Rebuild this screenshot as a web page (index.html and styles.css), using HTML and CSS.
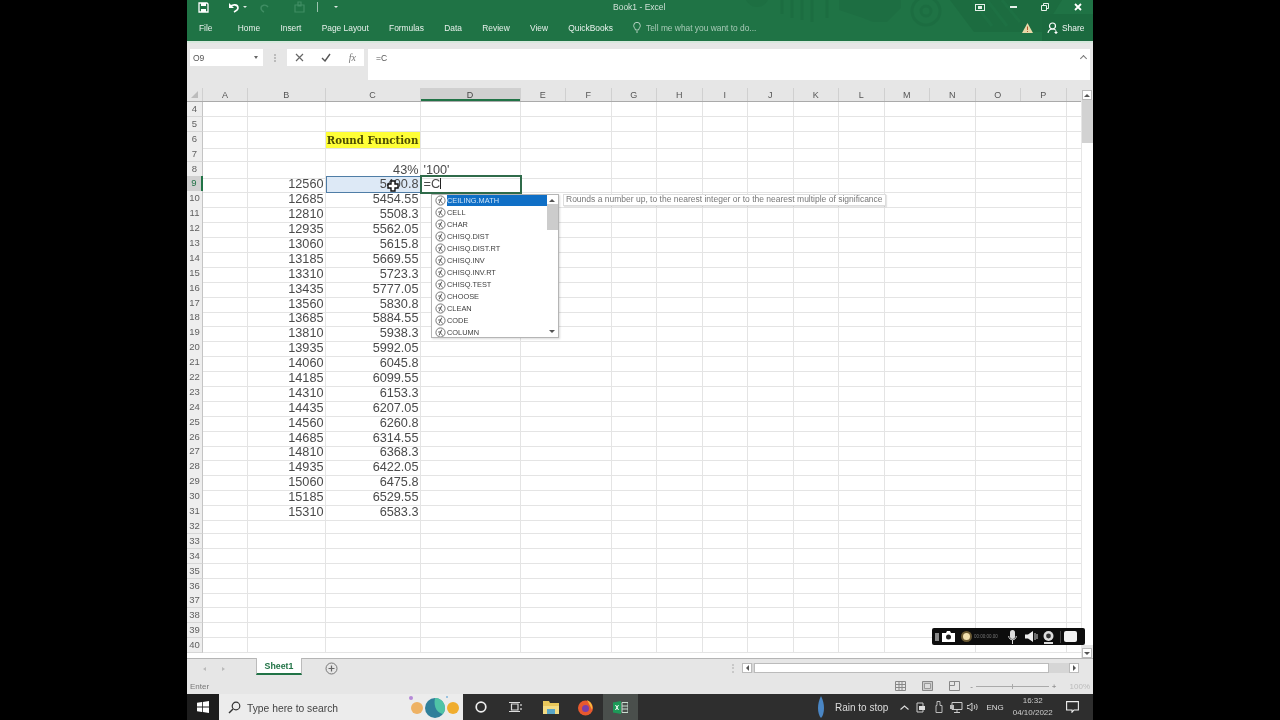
FILE: index.html
```html
<!DOCTYPE html>
<html lang="en">
<head>
  <meta charset="UTF-8" />
  <title>Book1 - Excel</title>
  <link rel="stylesheet" href="styles.css">
</head>
<body>
  <svg class="defs" width="0" height="0">
    <symbol id="fn" viewBox="0 0 11 11">
      <circle cx="5.5" cy="5.5" r="4.6" fill="#fff" stroke="#777" stroke-width="1"/>
      <path d="M6.8 2.6 4 8.4M3.2 5h3M5.4 6 7.8 8.4" fill="none" stroke="#555" stroke-width="1"/>
    </symbol>
  </svg>

  <div class="screen">
    <header class="ribbon">
      <svg class="pattern" width="906" height="41" viewBox="0 0 906 41">
        <g fill="#1b6a3f">
          <path d="M652 0h62v8l-14 14-14 0-10-4-24-8z" opacity=".5"/>
          <circle cx="570" cy="-5" r="12" opacity=".4"/>
          <path d="M763 0h112l-20 32h-68z" opacity=".8"/>
        </g>
        <g fill="none" stroke="#1b6a3f" stroke-width="3" opacity=".6">
          <circle cx="739" cy="11" r="14"/>
          <circle cx="739" cy="11" r="5"/>
          <path d="M595 0v14M605 0v18M615 0v20M625 0v22M640 0v18"/>
          <path d="M785 0l20 26M800 0l20 26M815 0l18 22" stroke="#1f7345"/>
        </g>
      </svg>

      <div class="titlebar">
        <div class="qat">
          <svg class="qat-save" width="11" height="11" viewBox="0 0 11 11"><path d="M1 1h8l1 1v8H1z" fill="none" stroke="#fff" stroke-width="1.3"/><path d="M3 1h5v3H3zM3 7h5v3H3z" fill="#fff"/></svg>
          <svg class="qat-undo" width="12" height="11" viewBox="0 0 12 11"><path d="M2 5c2-3 8-3 8 1 0 2-2 3-4 4" fill="none" stroke="#fff" stroke-width="1.6"/><path d="M1 1v5h5z" fill="#fff"/></svg>
          <span class="qat-caret"></span>
          <svg class="qat-redo" width="11" height="11" viewBox="0 0 11 11"><path d="M9 5C7 2 2 3 2 6c0 2 1 3 3 4" fill="none" stroke="#3f8d63" stroke-width="1.4"/></svg>
          <svg class="qat-touch" width="11" height="12" viewBox="0 0 11 12"><path d="M1 4h9v7H1zM4 1h3v4H4z" fill="none" stroke="#3f8d63" stroke-width="1.2"/></svg>
          <span class="qat-sep"></span>
          <span class="qat-caret qat-last"></span>
        </div>
        <div class="doc-title">Book1 - Excel</div>
        <div class="win-btns">
          <svg width="10" height="7" viewBox="0 0 10 7"><rect x=".5" y=".5" width="9" height="6" fill="none" stroke="#e6f0ea"/><rect x="3" y="2" width="4" height="3" fill="#e6f0ea"/></svg>
          <span class="win-min"></span>
          <svg width="8" height="8" viewBox="0 0 8 8"><path d="M2.5 2V.5h5v5H6M.5 2.5h5v5h-5z" fill="none" stroke="#e6f0ea"/></svg>
          <svg width="8" height="8" viewBox="0 0 8 8"><path d="M1 1l6 6M7 1 1 7" stroke="#fff" stroke-width="1.8"/></svg>
        </div>
      </div>

      <div class="tabs">
        <nav class="tab-list">
          <a class="tab-file">File</a>
          <a>Home</a>
          <a>Insert</a>
          <a>Page Layout</a>
          <a>Formulas</a>
          <a>Data</a>
          <a>Review</a>
          <a>View</a>
          <a>QuickBooks</a>
        </nav>
        <div class="tell-me">
          <svg width="8" height="11" viewBox="0 0 8 11"><path d="M2.5 8C2 6 .7 5.5.7 3.6a3.3 3.3 0 0 1 6.6 0C7.3 5.5 6 6 5.5 8zM3 10h2" fill="none" stroke="#b7d3c3"/></svg>
          <span>Tell me what you want to do...</span>
        </div>
        <svg class="warn" width="11" height="10" viewBox="0 0 11 10"><path d="M5.5 0 11 10H0z" fill="#e8d9a8"/><path d="M5 3.5h1V7H5zM5 8h1v1H5z" fill="#b5562c"/></svg>
        <div class="share">
          <svg width="12" height="12" viewBox="0 0 12 12"><circle cx="5.5" cy="4" r="3" fill="none" stroke="#fff" stroke-width="1.2"/><path d="M1 11c.5-3 2-4 4.5-4s3 .7 3.5 1.5M9 9v3M7.5 10.5h3" fill="none" stroke="#fff" stroke-width="1.2"/></svg>
          <span>Share</span>
        </div>
      </div>
    </header>

    <section class="formula-bar">
      <div class="name-box"><span>O9</span><i class="caret-down"></i></div>
      <span class="grip"></span>
      <div class="fx-btns">
        <svg width="9" height="9" viewBox="0 0 9 9"><path d="M1 1l7 7M8 1 1 8" stroke="#666" stroke-width="1.2"/></svg>
        <svg width="10" height="9" viewBox="0 0 10 9"><path d="M1 5l3 3 5-7" fill="none" stroke="#555" stroke-width="1.4"/></svg>
        <span class="fx-label">fx</span>
      </div>
      <div class="formula-input"><span>=C</span><i class="chev-up"></i></div>
    </section>

    <section class="sheet">
      <div class="grid">
        <div class="col-heads">
          <div class="corner"><i></i></div>
          <div>A</div><div>B</div><div>C</div><div class="col-active">D</div><div>E</div><div>F</div><div>G</div><div>H</div><div>I</div><div>J</div><div>K</div><div>L</div><div>M</div><div>N</div><div>O</div><div>P</div><div class="col-end"></div>
        </div>

        <div class="rows">
          <div class="row"><div class="rh">4</div><div></div><div></div><div></div><div></div><div class="rest"></div></div>
          <div class="row"><div class="rh">5</div><div></div><div></div><div></div><div></div><div class="rest"></div></div>
          <div class="row"><div class="rh">6</div><div></div><div></div><div class="title-cell">Round Function</div><div></div><div class="rest"></div></div>
          <div class="row"><div class="rh">7</div><div></div><div></div><div></div><div></div><div class="rest"></div></div>
          <div class="row"><div class="rh">8</div><div></div><div></div><div class="num">43%</div><div class="txt">'100'</div><div class="rest"></div></div>
          <div class="row row-active"><div class="rh">9</div><div></div><div class="num">12560</div><div class="num cell-ref">5400.8</div><div class="txt cell-edit">=C<i class="text-caret"></i></div><div class="rest"></div></div>
          <div class="row"><div class="rh">10</div><div></div><div class="num">12685</div><div class="num">5454.55</div><div></div><div class="rest"></div></div>
          <div class="row"><div class="rh">11</div><div></div><div class="num">12810</div><div class="num">5508.3</div><div></div><div class="rest"></div></div>
          <div class="row"><div class="rh">12</div><div></div><div class="num">12935</div><div class="num">5562.05</div><div></div><div class="rest"></div></div>
          <div class="row"><div class="rh">13</div><div></div><div class="num">13060</div><div class="num">5615.8</div><div></div><div class="rest"></div></div>
          <div class="row"><div class="rh">14</div><div></div><div class="num">13185</div><div class="num">5669.55</div><div></div><div class="rest"></div></div>
          <div class="row"><div class="rh">15</div><div></div><div class="num">13310</div><div class="num">5723.3</div><div></div><div class="rest"></div></div>
          <div class="row"><div class="rh">16</div><div></div><div class="num">13435</div><div class="num">5777.05</div><div></div><div class="rest"></div></div>
          <div class="row"><div class="rh">17</div><div></div><div class="num">13560</div><div class="num">5830.8</div><div></div><div class="rest"></div></div>
          <div class="row"><div class="rh">18</div><div></div><div class="num">13685</div><div class="num">5884.55</div><div></div><div class="rest"></div></div>
          <div class="row"><div class="rh">19</div><div></div><div class="num">13810</div><div class="num">5938.3</div><div></div><div class="rest"></div></div>
          <div class="row"><div class="rh">20</div><div></div><div class="num">13935</div><div class="num">5992.05</div><div></div><div class="rest"></div></div>
          <div class="row"><div class="rh">21</div><div></div><div class="num">14060</div><div class="num">6045.8</div><div></div><div class="rest"></div></div>
          <div class="row"><div class="rh">22</div><div></div><div class="num">14185</div><div class="num">6099.55</div><div></div><div class="rest"></div></div>
          <div class="row"><div class="rh">23</div><div></div><div class="num">14310</div><div class="num">6153.3</div><div></div><div class="rest"></div></div>
          <div class="row"><div class="rh">24</div><div></div><div class="num">14435</div><div class="num">6207.05</div><div></div><div class="rest"></div></div>
          <div class="row"><div class="rh">25</div><div></div><div class="num">14560</div><div class="num">6260.8</div><div></div><div class="rest"></div></div>
          <div class="row"><div class="rh">26</div><div></div><div class="num">14685</div><div class="num">6314.55</div><div></div><div class="rest"></div></div>
          <div class="row"><div class="rh">27</div><div></div><div class="num">14810</div><div class="num">6368.3</div><div></div><div class="rest"></div></div>
          <div class="row"><div class="rh">28</div><div></div><div class="num">14935</div><div class="num">6422.05</div><div></div><div class="rest"></div></div>
          <div class="row"><div class="rh">29</div><div></div><div class="num">15060</div><div class="num">6475.8</div><div></div><div class="rest"></div></div>
          <div class="row"><div class="rh">30</div><div></div><div class="num">15185</div><div class="num">6529.55</div><div></div><div class="rest"></div></div>
          <div class="row"><div class="rh">31</div><div></div><div class="num">15310</div><div class="num">6583.3</div><div></div><div class="rest"></div></div>
          <div class="row"><div class="rh">32</div><div></div><div></div><div></div><div></div><div class="rest"></div></div>
          <div class="row"><div class="rh">33</div><div></div><div></div><div></div><div></div><div class="rest"></div></div>
          <div class="row"><div class="rh">34</div><div></div><div></div><div></div><div></div><div class="rest"></div></div>
          <div class="row"><div class="rh">35</div><div></div><div></div><div></div><div></div><div class="rest"></div></div>
          <div class="row"><div class="rh">36</div><div></div><div></div><div></div><div></div><div class="rest"></div></div>
          <div class="row"><div class="rh">37</div><div></div><div></div><div></div><div></div><div class="rest"></div></div>
          <div class="row"><div class="rh">38</div><div></div><div></div><div></div><div></div><div class="rest"></div></div>
          <div class="row"><div class="rh">39</div><div></div><div></div><div></div><div></div><div class="rest"></div></div>
          <div class="row"><div class="rh">40</div><div></div><div></div><div></div><div></div><div class="rest"></div></div>
        </div>
      </div>

      <div class="vscroll">
        <i class="sb-btn"><b class="arrow-up"></b></i>
        <i class="vs-track"></i>
        <i class="vs-thumb"></i>
        <i class="sb-btn"><b class="arrow-down"></b></i>
      </div>

      <!-- cursor over the referenced cell -->
      <svg class="cursor" width="12" height="12" viewBox="0 0 12 12"><path d="M4 1h4v3h3v4H8v3H4V8H1V4h3z" fill="#fff" stroke="#111" stroke-width="1.4"/></svg>

      <!-- formula autocomplete -->
      <div class="autocomplete">
        <ul class="ac-list">
          <li class="ac-selected"><svg width="11" height="11"><use href="#fn"/></svg><span>CEILING.MATH</span></li>
          <li><svg width="11" height="11"><use href="#fn"/></svg><span>CELL</span></li>
          <li><svg width="11" height="11"><use href="#fn"/></svg><span>CHAR</span></li>
          <li><svg width="11" height="11"><use href="#fn"/></svg><span>CHISQ.DIST</span></li>
          <li><svg width="11" height="11"><use href="#fn"/></svg><span>CHISQ.DIST.RT</span></li>
          <li><svg width="11" height="11"><use href="#fn"/></svg><span>CHISQ.INV</span></li>
          <li><svg width="11" height="11"><use href="#fn"/></svg><span>CHISQ.INV.RT</span></li>
          <li><svg width="11" height="11"><use href="#fn"/></svg><span>CHISQ.TEST</span></li>
          <li><svg width="11" height="11"><use href="#fn"/></svg><span>CHOOSE</span></li>
          <li><svg width="11" height="11"><use href="#fn"/></svg><span>CLEAN</span></li>
          <li><svg width="11" height="11"><use href="#fn"/></svg><span>CODE</span></li>
          <li><svg width="11" height="11"><use href="#fn"/></svg><span>COLUMN</span></li>
        </ul>
        <div class="ac-scroll">
          <b class="arrow-up"></b>
          <i class="ac-thumb"></i>
          <b class="arrow-down"></b>
        </div>
      </div>
      <div class="ac-tip">Rounds a number up, to the nearest integer or to the nearest multiple of significance</div>

      <!-- screen recorder toolbar -->
      <div class="recorder">
        <span class="rec-grip"></span>
        <svg width="13" height="11" viewBox="0 0 13 11"><path d="M0 2h4l1-2h3l1 2h4v9H0z" fill="#fff"/><circle cx="6.5" cy="6" r="2.5" fill="#222"/></svg>
        <span class="rec-dot"></span>
        <span class="rec-time">00:00:00.00</span>
        <svg class="rec-mic" width="9" height="14" viewBox="0 0 9 14"><rect x="2" y="0" width="5" height="9" rx="2.5" fill="#ddd"/><path d="M.7 6c0 5 7.6 5 7.6 0M4.5 10v4" fill="none" stroke="#ddd"/></svg>
        <svg class="rec-spk" width="13" height="11" viewBox="0 0 13 11"><path d="M0 3.5h3L8 0v11L3 7.5H0z" fill="#eee"/><path d="M10 2v7M12 3v5" stroke="#aaa" stroke-width="1.2"/></svg>
        <svg class="rec-cam" width="13" height="14" viewBox="0 0 13 14"><circle cx="6.5" cy="6" r="5" fill="#ddd"/><circle cx="6.5" cy="6" r="2.4" fill="#333"/><path d="M2 13h9" stroke="#ddd" stroke-width="2"/></svg>
        <span class="rec-sep"></span>
        <span class="rec-win"></span>
      </div>
    </section>

    <section class="sheet-tabs">
      <div class="tab-arrows"><i class="tri-left"></i><i class="tri-right"></i></div>
      <div class="sheet-tab">Sheet1</div>
      <svg class="add-sheet" width="13" height="13" viewBox="0 0 13 13"><circle cx="6.5" cy="6.5" r="5.5" fill="none" stroke="#777"/><path d="M3.5 6.5h6M6.5 3.5v6" stroke="#666" stroke-width="1.2"/></svg>
      <span class="tabs-grip"></span>
      <div class="hscroll">
        <i class="sb-btn"><b class="arrow-left"></b></i>
        <i class="hs-thumb"></i>
        <i class="sb-btn"><b class="arrow-right"></b></i>
      </div>
    </section>

    <footer class="status">
      <span class="status-text">Enter</span>
      <div class="status-right">
        <svg width="11" height="10" viewBox="0 0 11 10"><path d="M.5.5h10v9H.5zM.5 3.5h10M.5 6.5h10M4 .5v9M7 .5v9" fill="none" stroke="#888"/></svg>
        <svg width="11" height="10" viewBox="0 0 11 10"><path d="M.5.5h10v9H.5z" fill="#ccc" stroke="#888"/><path d="M2.5 2.5h6v5h-6z" fill="#ddd" stroke="#999"/></svg>
        <svg width="11" height="10" viewBox="0 0 11 10"><path d="M.5.5h10v9H.5zM5.5.5v4H.5" fill="none" stroke="#888"/></svg>
        <div class="zoom-slider"><span>-</span><i class="zoom-line"><b></b></i><span>+</span></div>
        <span class="zoom-pct">100%</span>
      </div>
    </footer>

    <footer class="taskbar">
      <div class="start">
        <svg width="12" height="12" viewBox="0 0 12 12"><path d="M0 1.7 5 1v4.600H0zM5.800.9 12 0v5.600H5.800zM0 6.400h5V11l-5-.7zM5.800 6.400H12V12l-6.200-.9z" fill="#fff"/></svg>
      </div>
      <div class="search">
        <svg width="13" height="13" viewBox="0 0 13 13"><circle cx="8" cy="5" r="3.8" fill="none" stroke="#333" stroke-width="1.2"/><path d="M5 8l-4 4" stroke="#333" stroke-width="1.5"/></svg>
        <span class="search-text">Type here to search</span>
        <svg class="doodle" width="52" height="24" viewBox="0 0 52 24"><circle cx="9" cy="13" r="6" fill="#eeb264"/><circle cx="27" cy="13" r="10" fill="#2f7f9a"/><path d="M27 3a10 10 0 0 1 8 16c-5-1-10-6-8-16z" fill="#4fc4a6"/><circle cx="45" cy="13" r="6" fill="#f0ad2e"/><circle cx="3" cy="3" r="2" fill="#b68ad8"/><circle cx="39" cy="2" r="1" fill="#7fb6dd"/></svg>
      </div>
      <div class="task-icons">
        <div class="task-icon"><svg width="12" height="12" viewBox="0 0 12 12"><circle cx="6" cy="6" r="4.8" fill="none" stroke="#eee" stroke-width="1.7"/></svg></div>
        <div class="task-icon"><svg width="13" height="10" viewBox="0 0 13 10"><path d="M2.5 2H9v6H2.5zM0 .5h11M0 9.500h11" fill="none" stroke="#ddd" stroke-width="1.2"/><path d="M12 2v2M12 6v2" stroke="#ddd" stroke-width="1.2"/></svg></div>
        <div class="task-icon"><svg width="16" height="13" viewBox="0 0 16 13"><path d="M0 0h6l1 2h9v11H0z" fill="#e8c75a"/><path d="M0 5h16v8H0z" fill="#f3dc84"/><path d="M4 8h8v5H4z" fill="#5aa6c8"/></svg></div>
        <div class="task-icon"><svg width="17" height="17" viewBox="0 0 17 17"><circle cx="8.5" cy="9" r="7.5" fill="#e8592e"/><circle cx="8.5" cy="9.5" r="3.5" fill="#7b3fa8"/><path d="M10 1c5 2 6 7 5 10-1-3-3-6-5-10z" fill="#f6b73c"/></svg></div>
        <div class="task-icon task-excel"><svg width="15" height="13" viewBox="0 0 15 13"><path d="M0 1.5 8 0v13L0 11.500z" fill="#1d9a58"/><path d="M2.5 4l3 5M5.500 4l-3 5" stroke="#fff"/><path d="M9 1.500h6v10H9z" fill="none" stroke="#c9ded0"/><path d="M9 5h6M9 8h6" stroke="#c9ded0"/></svg></div>
      </div>
      <div class="tray">
        <svg class="weather" width="6" height="22" viewBox="0 0 6 22"><path d="M3 0c2 4 3 8 3 12s-1 8-3 10c-2-2-3-6-3-10S1 4 3 0z" fill="#4a86c4"/></svg>
        <span class="weather-text">Rain to stop</span>
        <svg class="tray-caret" width="9" height="5" viewBox="0 0 9 5"><path d="M.5 4.500 4.500 1l4 3.500" fill="none" stroke="#ddd" stroke-width="1.1"/></svg>
        <svg width="9" height="11" viewBox="0 0 9 11"><path d="M1 1h6v9H1z" fill="none" stroke="#ccc"/><rect x="3" y="4" width="6" height="4" fill="#ddd"/></svg>
        <svg class="tray-usb" width="8" height="12" viewBox="0 0 8 12"><path d="M2 .5h3v4h2v7H1v-7h1z" fill="none" stroke="#bbb"/></svg>
        <svg width="13" height="11" viewBox="0 0 13 11"><path d="M2 .5h10v7H2zM7 8v2M4 10.500h6" fill="none" stroke="#ccc"/><path d="M0 3h4v4H0z" fill="#bbb"/></svg>
        <svg class="tray-spk" width="11" height="10" viewBox="0 0 11 10"><path d="M0 3.500h2L5 1v8L2 6.500H0z" fill="none" stroke="#ddd" stroke-width=".9"/><path d="M7 3c1 1 1 3 0 4M9 2c1.500 1.500 1.500 4.500 0 6" fill="none" stroke="#ddd" stroke-width=".9"/></svg>
        <span class="lang">ENG</span>
        <div class="clock"><span>16:32</span><span>04/10/2022</span></div>
        <svg class="notif" width="13" height="12" viewBox="0 0 13 12"><path d="M.6.600h11.800v8.400H8L6 11.200V9H.6z" fill="none" stroke="#eee" stroke-width="1.1"/></svg>
      </div>
    </footer>
  </div>
</body>
</html>
```

FILE: styles.css
```css
* {
  margin: 0;
  padding: 0;
  box-sizing: border-box;
}

html, body {
  height: 100%;
  overflow: hidden;
  background: #000;
  font-family: "Liberation Sans", Arial, sans-serif;
}

.defs {
  position: absolute;
}

.screen {
  width: 906px;
  height: 720px;
  margin: 0 auto;
  display: flex;
  flex-direction: column;
  background: #e6e6e6;
  filter: blur(0.45px);
}

/* ribbon */
.ribbon {
  position: relative;
  height: 43px;
  flex: none;
  background: #1f7345;
  border-bottom: 2px solid #d7e8dd;
  color: #e8f1ec;
}

.pattern {
  position: absolute;
  left: 0;
  top: 0;
}

.titlebar {
  position: relative;
  height: 14px;
  display: flex;
  align-items: center;
}

.qat {
  display: flex;
  align-items: center;
  padding-left: 11px;
  width: 370px;
}

.qat-undo { margin-left: 19px; }
.qat-caret {
  margin-left: 3px;
  border-left: 2px solid transparent;
  border-right: 2px solid transparent;
  border-top: 2px solid #dfeae4;
}
.qat-redo { margin-left: 12px; }
.qat-touch { margin-left: 24px; }
.qat-sep {
  width: 1px;
  height: 10px;
  background: #9bc4ae;
  margin-left: 12px;
}
.qat-last { margin-left: 16px; }

.doc-title {
  margin-left: 56px;
  font-size: 8.5px;
  color: #cfe0d6;
}

.win-btns {
  margin-left: auto;
  width: 118px;
  padding-right: 11px;
  display: flex;
  align-items: center;
  justify-content: space-between;
}

.win-min {
  width: 7px;
  height: 2px;
  background: #e6f0ea;
}

.tabs {
  position: relative;
  height: 27px;
  display: flex;
  align-items: center;
  font-size: 8.4px;
}

.tab-list {
  display: flex;
  gap: 20.3px;
  padding-left: 12px;
}

.tab-file {
  margin-right: 5px;
}

.tell-me {
  display: flex;
  align-items: center;
  gap: 5px;
  margin-left: 20px;
  color: #a9cbb8;
}

.warn {
  margin-left: auto;
  margin-right: 9px;
}

.share {
  width: 51px;
  height: 27px;
  background: #1b6a3f;
  display: flex;
  align-items: center;
  gap: 3px;
  padding-left: 5px;
  color: #f2f6f4;
}

/* formula bar */
.formula-bar {
  height: 45px;
  flex: none;
  padding: 6px 3px 8px;
  display: flex;
  align-items: flex-start;
  font-size: 8.5px;
  color: #555;
}

.name-box {
  width: 73px;
  height: 17px;
  background: #fff;
  display: flex;
  align-items: center;
  justify-content: space-between;
  padding: 0 5px 0 3px;
}

.caret-down {
  border-left: 2.5px solid transparent;
  border-right: 2.5px solid transparent;
  border-top: 3px solid #666;
}

.grip {
  width: 2px;
  height: 8px;
  margin: 5px 11px 0;
  border-left: 2px dotted #bbb;
}

.fx-btns {
  width: 77px;
  height: 17px;
  background: #fff;
  display: flex;
  align-items: center;
  justify-content: space-between;
  padding: 0 8px;
}

.fx-label {
  font-family: "Liberation Serif", serif;
  font-style: italic;
  font-size: 10px;
  color: #777;
}

.formula-input {
  flex: 1;
  height: 31px;
  margin-left: 4px;
  background: #fff;
  display: flex;
  justify-content: space-between;
  padding: 4px 4px 0 8px;
}

.chev-up {
  width: 5px;
  height: 5px;
  margin-top: 3px;
  border-left: 1.2px solid #777;
  border-top: 1.2px solid #777;
  transform: rotate(45deg);
}

/* sheet */
.sheet {
  position: relative;
  flex: 1;
  display: flex;
  min-height: 0;
  overflow: hidden;
}

.grid {
  width: 894px;
  display: flex;
  flex-direction: column;
  background: #fff;
}

.col-heads {
  height: 14px;
  flex: none;
  display: grid;
  grid-template-columns: 16px 45px 77.5px 95px 100px repeat(12, 45.5px) 1fr;
  background: #e6e6e6;
  border-bottom: 1px solid #aaa;
  font-size: 9px;
  color: #555;
}

.col-heads div {
  display: flex;
  align-items: center;
  justify-content: center;
  border-right: 1px solid #d0d0d0;
}

.col-heads .col-end {
  border-right: 0;
}

.col-heads .col-active {
  background: #d0d0d0;
  box-shadow: inset 0 -2px 0 #217346;
  color: #444;
}

.corner i {
  border-left: 7px solid transparent;
  border-bottom: 7px solid #bdbdbd;
}

.rows {
  flex: 1;
  overflow: hidden;
}

.row {
  height: 14.9px;
  display: grid;
  grid-template-columns: 16px 45px 77.5px 95px 100px 1fr;
  font-size: 12.7px;
  line-height: 16px;
  color: #4a4a4a;
}

.row > div {
  border-right: 1px solid #e4e4e4;
  border-bottom: 1px solid #e4e4e4;
  white-space: nowrap;
}

.row > .rh {
  background: #eee;
  border-right: 1px solid #c4c4c4;
  border-bottom: 1px solid #d6d6d6;
  text-align: center;
  font-size: 9.5px;
  line-height: 14px;
  color: #5f5f5f;
}

.row > .rest {
  border-right: 0;
  background: repeating-linear-gradient(90deg, transparent 0 44.5px, #e4e4e4 44.5px 45.5px);
}

.num {
  text-align: right;
  padding-right: 1px;
}

.txt {
  padding-left: 3px;
}

.row > .title-cell {
  background: #ffff37;
  font-family: "DejaVu Serif", serif;
  font-weight: bold;
  font-size: 10.2px;
  color: #4d4d00;
  text-align: center;
}

.row-active > .rh {
  background: #d0d0d0;
  border-right: 2px solid #217346;
  color: #217346;
}

.row > .cell-ref {
  background: #dde9f6;
  outline: 1px solid #4f7da6;
  outline-offset: -1px;
}

.row > .cell-edit {
  outline: 2px solid #2f6b4a;
  outline-offset: -1px;
  position: relative;
}

.text-caret {
  display: inline-block;
  width: 1px;
  height: 11px;
  background: #222;
  vertical-align: -1px;
}

.vscroll {
  flex: 1;
  display: flex;
  flex-direction: column;
  background: #e6e6e6;
  padding: 2px 0 0 1px;
}

.sb-btn {
  width: 10px;
  height: 10px;
  flex: none;
  background: #fff;
  border: 1px solid #bbb;
  display: flex;
  align-items: center;
  justify-content: center;
}

.vs-track {
  height: 43px;
  background: #d2d2d2;
}

.vs-thumb {
  flex: 1;
  background: #fff;
  margin-bottom: 3px;
}

.arrow-up, .arrow-down {
  width: 0;
  height: 0;
  border-left: 3px solid transparent;
  border-right: 3px solid transparent;
}
.arrow-up { border-bottom: 3px solid #555; }
.arrow-down { border-top: 3px solid #555; }

.arrow-left, .arrow-right {
  width: 0;
  height: 0;
  border-top: 3px solid transparent;
  border-bottom: 3px solid transparent;
}
.arrow-left { border-right: 3px solid #555; }
.arrow-right { border-left: 3px solid #555; }

.cursor {
  position: absolute;
  left: 200px;
  top: 92px;
}

/* autocomplete popup */
.autocomplete {
  position: absolute;
  left: 244px;
  top: 106px;
  width: 127.5px;
  height: 144px;
  background: #fff;
  border: 1px solid #b5b5b5;
  box-shadow: 1px 1px 2px rgba(0,0,0,0.15);
  display: flex;
}

.ac-list {
  flex: 1;
  list-style: none;
  overflow: hidden;
  margin-top: -1px;
}

.ac-list li {
  height: 12px;
  display: flex;
  align-items: center;
  gap: 1px;
  padding-left: 3px;
  font-size: 7.4px;
  color: #3c3c3c;
}

.ac-list li span {
  flex: 1;
  line-height: 11px;
}

.ac-selected span {
  background: #0f6fc6;
  color: #cfe4f7;
}

.ac-scroll {
  width: 11px;
  flex: none;
  display: flex;
  flex-direction: column;
  align-items: center;
  padding: 4px 0;
}

.ac-thumb {
  width: 100%;
  height: 26px;
  margin: 2px 0 auto;
  background: #ccc;
}

.ac-tip {
  position: absolute;
  left: 376px;
  top: 106px;
  width: 323px;
  height: 12px;
  background: #fff;
  border: 1px solid #ddd;
  box-shadow: 1px 1px 1px rgba(0,0,0,0.1);
  padding-left: 2px;
  font-size: 8.5px;
  line-height: 9px;
  color: #777;
  white-space: nowrap;
}

/* recorder */
.recorder {
  position: absolute;
  left: 745px;
  top: 540px;
  width: 153px;
  height: 17px;
  background: #0d0d0d;
  border-radius: 2px;
  display: flex;
  align-items: center;
  padding-left: 3px;
}

.rec-grip {
  width: 4px;
  height: 8px;
  background: #888;
  margin-right: 3px;
}

.rec-dot {
  width: 11px;
  height: 11px;
  border-radius: 50%;
  background: #f1dfae;
  border: 2px solid #6b5a33;
  margin-left: 6px;
}

.rec-time {
  font-size: 4.5px;
  color: #777;
  margin-left: 2px;
  width: 31px;
}

.rec-mic { margin-left: 3px; }
.rec-spk { margin-left: 8px; }
.rec-cam { margin-left: 4px; }

.rec-sep {
  width: 1px;
  height: 12px;
  background: #444;
  margin-left: 5px;
}

.rec-win {
  width: 13px;
  height: 11px;
  background: #f2f2f2;
  border-radius: 2px;
  margin-left: 3px;
}

/* sheet tabs */
.sheet-tabs {
  height: 20px;
  flex: none;
  display: flex;
  align-items: flex-start;
  border-top: 1px solid #b5b5b5;
  background: #e6e6e6;
}

.tab-arrows {
  width: 69px;
  display: flex;
  gap: 16px;
  padding: 8px 0 0 16px;
}

.tri-left, .tri-right {
  border-top: 2px solid transparent;
  border-bottom: 2px solid transparent;
}
.tri-left { border-right: 3px solid #bbb; }
.tri-right { border-left: 3px solid #bbb; }

.sheet-tab {
  width: 46px;
  height: 17px;
  margin-top: -1px;
  background: #fff;
  border: 1px solid #bbb;
  border-top: 0;
  border-bottom: 2px solid #217346;
  color: #217346;
  font-weight: bold;
  font-size: 8.8px;
  text-align: center;
  line-height: 17px;
}

.add-sheet {
  margin: 3px 0 0 23px;
}

.tabs-grip {
  width: 2px;
  height: 9px;
  margin: 5px 0 0 394px;
  border-left: 2px dotted #c8c8c8;
}

.hscroll {
  margin: 4px 0 0 8px;
  width: 337px;
  height: 10px;
  background: #d6d6d6;
  display: flex;
  gap: 2px;
}

.hs-thumb {
  width: 295px;
  background: #fff;
  border: 1px solid #bbb;
}

.hscroll .sb-btn:last-child {
  margin-left: auto;
}

/* status bar */
.status {
  height: 16px;
  flex: none;
  display: flex;
  align-items: center;
  justify-content: space-between;
  padding: 0 3px;
  font-size: 8px;
  color: #777;
  background: #e6e6e6;
}

.status-right {
  display: flex;
  align-items: center;
  gap: 16px;
}

.zoom-slider {
  display: flex;
  align-items: center;
  gap: 3px;
  margin-left: -6px;
}

.zoom-line {
  position: relative;
  width: 73px;
  height: 1px;
  background: #aaa;
}

.zoom-line b {
  position: absolute;
  left: 36px;
  top: -2px;
  width: 1px;
  height: 5px;
  background: #aaa;
}

.zoom-pct {
  margin-left: -3px;
  color: #bbb;
}

/* windows taskbar */
.taskbar {
  height: 26px;
  flex: none;
  display: flex;
  background: #2e2e2e;
  color: #ddd;
}

.start {
  width: 32px;
  background: #1d1d1d;
  display: flex;
  align-items: center;
  justify-content: center;
}

.search {
  width: 244px;
  background: #ececec;
  display: flex;
  align-items: center;
  padding-left: 9px;
  color: #444;
  font-size: 10.3px;
}

.search-text {
  margin-left: 6px;
  padding-top: 2px;
}

.doodle {
  margin-left: auto;
  margin-right: 3px;
}

.task-icons {
  display: flex;
}

.task-icon {
  width: 35px;
  display: flex;
  align-items: center;
  justify-content: center;
}

.task-excel {
  background: #4a4f4c;
}

.tray {
  flex: 1;
  display: flex;
  align-items: center;
  padding-left: 180px;
  gap: 7px;
  font-size: 10px;
  white-space: nowrap;
}

.weather-text {
  margin-left: 4px;
  margin-right: 5px;
}

.tray-usb {
  margin-left: 3px;
}

.tray-spk {
  margin-left: -3px;
}

.lang {
  font-size: 8px;
  margin-left: 1px;
}

.clock {
  display: flex;
  flex-direction: column;
  align-items: center;
  font-size: 8px;
  line-height: 12.5px;
  margin-left: -1px;
  width: 46px;
  color: #ccc;
}

.notif {
  margin-left: 3px;
}
```
